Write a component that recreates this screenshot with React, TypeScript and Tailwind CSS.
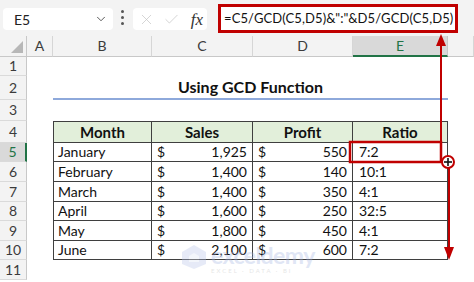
import { ChevronDown, X, Check } from 'lucide-react'

const rows = [
  { month: 'January', sales: '1,925', profit: '550', ratio: '7:2' },
  { month: 'February', sales: '1,400', profit: '140', ratio: '10:1' },
  { month: 'March', sales: '1,400', profit: '350', ratio: '4:1' },
  { month: 'April', sales: '1,600', profit: '250', ratio: '32:5' },
  { month: 'May', sales: '1,800', profit: '450', ratio: '4:1' },
  { month: 'June', sales: '2,100', profit: '600', ratio: '7:2' },
]

const cols = ['A', 'B', 'C', 'D', 'E', '']

function RowHead({ n }: { n: number }) {
  const active = n === 5
  return (
    <div
      className={`flex items-center justify-center border-b border-[#dadada] text-[14px] leading-none text-[#3b3b3b] ${
        active ? 'bg-[#d9d9d9] border-r-2 border-r-[#217346] text-[#217346]' : 'bg-[#f3f3f3] border-r border-r-[#c8c8c8]'
      }`}
    >
      {n}
    </div>
  )
}

const cell = 'border-r border-b border-[#3f3f3f] flex items-center text-[14px] leading-none text-[#111]'

export default function App() {
  return (
    <div className="relative w-[474px] h-[282px] overflow-hidden bg-white font-['Lato','Liberation_Sans',sans-serif]">
      {/* formula bar */}
      <div className="flex items-start h-[36px] bg-[#f3f3f3] pl-[3px]">
        <div className="mt-[8px] w-[110px] h-[22px] bg-white rounded-[4px] flex items-center justify-between pl-[11px] pr-[5px] text-[14px] text-[#222]">
          <span>E5</span>
          <ChevronDown size={14} strokeWidth={1.5} className="text-[#444]" />
        </div>
        <div className="mt-[10px] ml-[7px] w-[4px] flex flex-col items-center gap-[3px]">
          <span className="w-[3px] h-[3px] rounded-full bg-[#555]" />
          <span className="w-[3px] h-[3px] rounded-full bg-[#555]" />
          <span className="w-[3px] h-[3px] rounded-full bg-[#555]" />
        </div>
        <div className="mt-[8px] ml-[9px] w-[74px] h-[22px] bg-white rounded-[4px] flex items-center pl-[5px] pr-[4px] gap-[8px]">
          <X size={17} strokeWidth={1} className="text-[#c4c4c4]" />
          <Check size={17} strokeWidth={1} className="text-[#c4c4c4]" />
          <span className="ml-auto font-['Liberation_Serif',serif] italic text-[17px] leading-none text-[#333]">fx</span>
        </div>
        <div className="mt-[4px] ml-[11px] w-[240px] h-[29px] bg-white border-[3px] border-[#c00000] flex items-center pl-[3px] text-[13px] tracking-[0.1px] text-[#111] whitespace-nowrap overflow-hidden">
          =C5/GCD(C5,D5)&amp;":"&amp;D5/GCD(C5,D5)
        </div>
      </div>

      {/* sheet */}
      <div className="grid grid-cols-[27px_26px_99px_101px_100px_95px_1fr] grid-rows-[21px_19px_24px_21px_22px_19px_20px_20px_19px_20px_19px_20px]">
        {/* column headers */}
        <div className="bg-[#f3f3f3] border-r border-b border-[#c8c8c8] relative">
          <div className="absolute right-[3px] bottom-[3px] w-0 h-0 border-l-[12px] border-l-transparent border-b-[12px] border-b-[#b7b7b7]" />
        </div>
        {cols.map((c) => (
          <div
            key={c || 'x'}
            className={`flex items-center justify-center text-[14px] leading-none ${
              c === 'E'
                ? 'bg-[#d9d9d9] border-b-2 border-b-[#217346] text-[#217346] border-r border-r-[#c8c8c8]'
                : 'bg-[#f3f3f3] border-b border-[#c8c8c8] border-r border-r-[#d6d6d6] text-[#3b3b3b]'
            }`}
          >
            {c}
          </div>
        ))}

        {/* row 1 */}
        <RowHead n={1} />
        <div className="col-span-6" />

        {/* row 2 title */}
        <RowHead n={2} />
        <div />
        <div className="col-span-4 flex items-center justify-center border-b-2 border-[#8ea9db] text-[16px] leading-none font-bold text-[#111]">
          Using GCD Function
        </div>
        <div />

        {/* row 3 */}
        <RowHead n={3} />
        <div className="col-span-6" />

        {/* row 4 header */}
        <RowHead n={4} />
        <div />
        {['Month', 'Sales', 'Profit', 'Ratio'].map((h, i) => (
          <div key={h} className={`${cell} border-t justify-center bg-[#e2efda] font-bold text-[15px] ${i === 0 ? 'border-l' : ''}`}>
            {h}
          </div>
        ))}
        <div />

        {rows.map((r, i) => (
          <div key={r.month} className="contents">
            <RowHead n={i + 5} />
            <div />
            <div className={`${cell} border-l pl-[4px]`}>{r.month}</div>
            <div className={`${cell} justify-between px-[5px]`}>
              <span>$</span>
              <span>{r.sales}</span>
            </div>
            <div className={`${cell} justify-between px-[5px]`}>
              <span>$</span>
              <span>{r.profit}</span>
            </div>
            <div className={`${cell} pl-[6px]`}>{r.ratio}</div>
            <div />
          </div>
        ))}

        <RowHead n={11} />
        <div className="col-span-6" />
      </div>

      {/* watermark */}
      <div className="absolute left-[180px] top-[244px] flex items-start gap-[3px] opacity-35 pointer-events-none">
        <svg width="28" height="26" viewBox="0 0 28 26">
          <path d="M14 1 L26 8 L26 20 L14 25 L2 20 L2 8 Z" fill="#b9c6ea" />
          <path d="M9 18 L9 12 L14 9 L19 12 L19 18 Z" fill="#dfe6f6" />
        </svg>
        <div className="flex flex-col leading-none">
          <span className="text-[23px] font-bold text-[#a9b8e3] tracking-tight">exceldemy</span>
          <span className="text-[6px] tracking-[2px] text-[#b8b8b8] mt-[1px]">EXCEL · DATA · BI</span>
        </div>
      </div>

      {/* annotations */}
      <svg className="absolute left-0 top-0 pointer-events-none" width="474" height="282">
        <rect x="350" y="142" width="91" height="20" fill="none" stroke="#c00000" strokeWidth="2.5" />
        <line x1="441" y1="44" x2="441" y2="142" stroke="#c00000" strokeWidth="2" />
        <polygon points="441,34 436,46 446,46" fill="#c00000" />
        <line x1="449" y1="168" x2="449" y2="250" stroke="#c00000" strokeWidth="2" />
        <polygon points="449,260 444,247 454,247" fill="#c00000" />
        <circle cx="448" cy="162" r="6" fill="white" stroke="#c00000" strokeWidth="2" />
        <line x1="444" y1="162" x2="452" y2="162" stroke="#111" strokeWidth="1.6" />
        <line x1="448" y1="158" x2="448" y2="166" stroke="#111" strokeWidth="1.6" />
      </svg>
    </div>
  )
}
